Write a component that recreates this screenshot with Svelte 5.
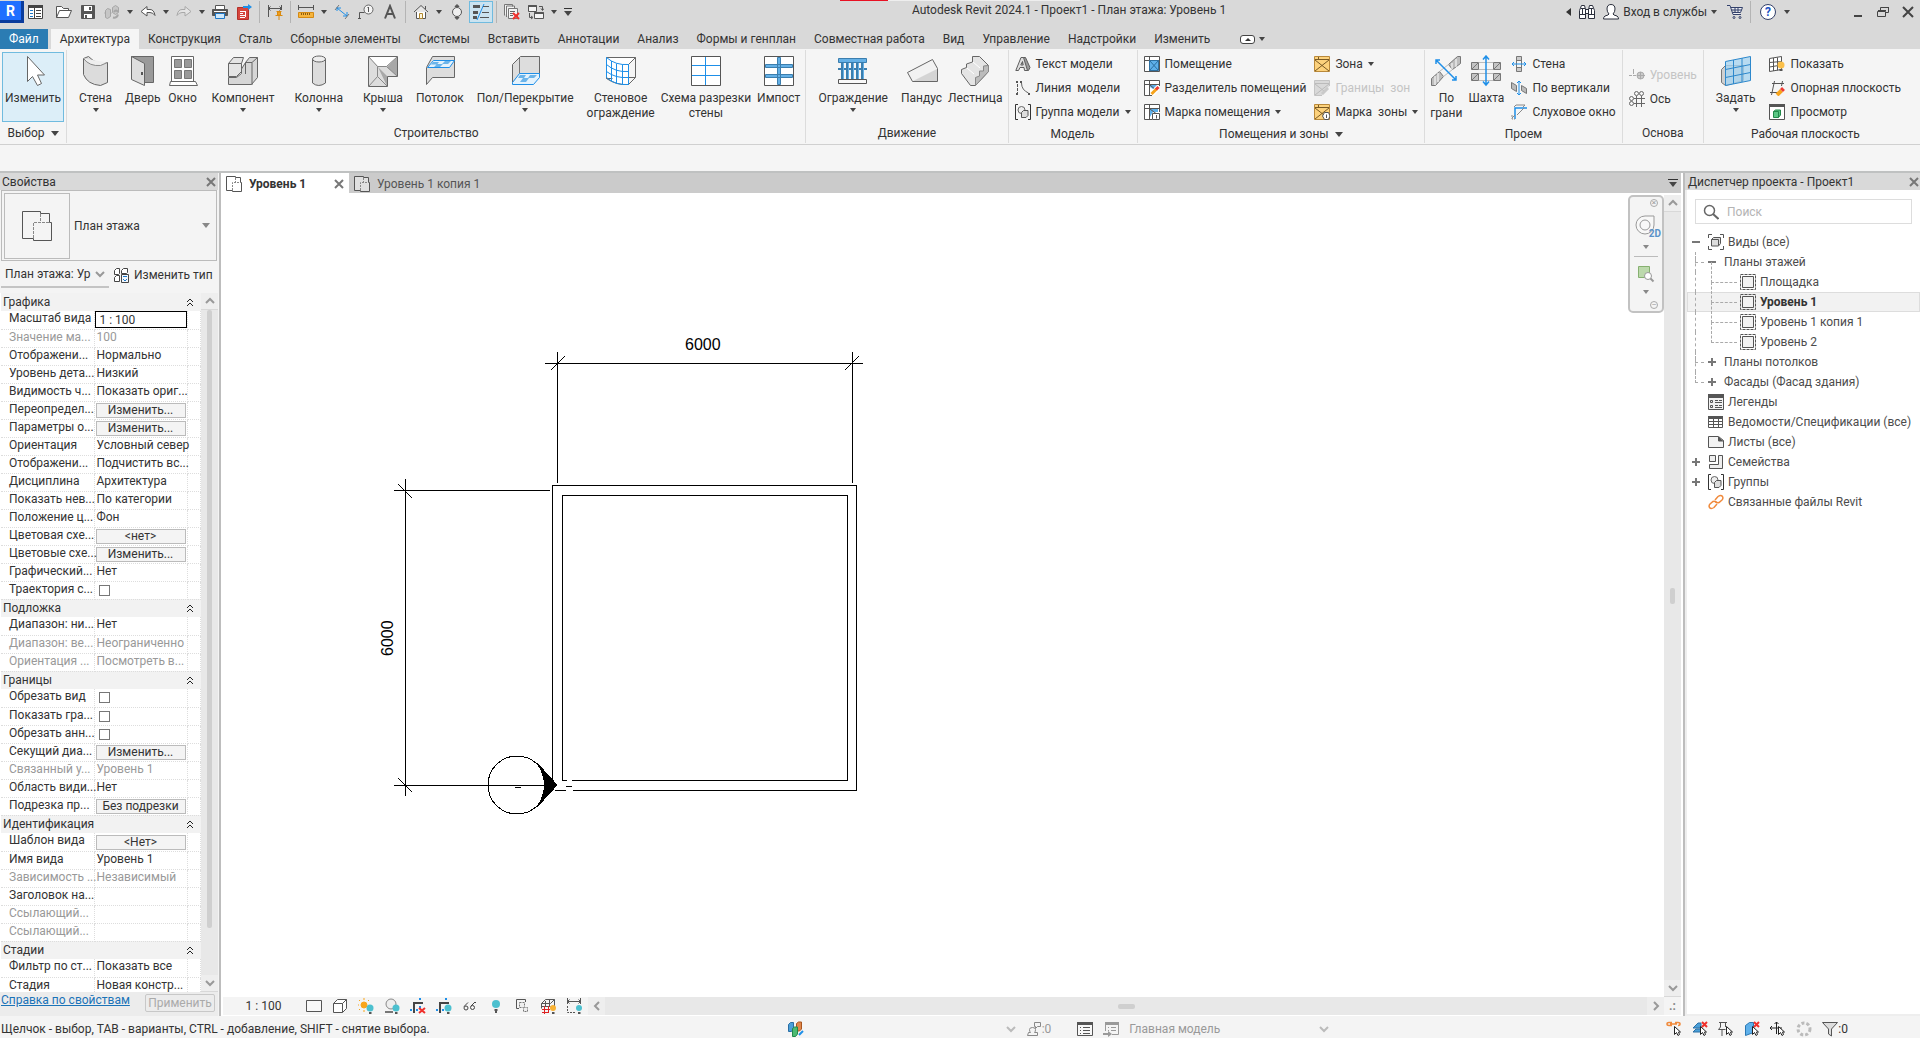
<script>
    // 16x16 icons
    const icons = {
        home: '<path fill="#fff" stroke="#444" d="M.5 1.5h14v13h-14z"/><path fill="#444" stroke="none" d="M0 1h15v3H0z"/><path stroke="#1e78c8" d="M2 6.5h3M2 9.5h3M2 12.5h3"/><path stroke="#444" d="M6.5 4v10M8 6.5h5M8 9.5h5M8 12.5h5"/>',
        open: '<path fill="#fff" stroke="#555" d="M.5 13.5v-11h5l2 2h5v2M.5 13.5l3-7h12l-3 7z"/>',
        save: '<path fill="#555" stroke="#555" d="M1.5 1.5h13v13h-13z"/><path fill="#fff" stroke="none" d="M4 2h8v5H4zM4 10h8v4H4z"/><path fill="#555" stroke="none" d="M9 3h2v3H9zM5 11h2v3H5z"/>',
        sync: '<g stroke="#a6a6a6" fill="#c6c6c6"><circle cx="4" cy="9" r="3"/><path d="M1.5 6.5l2-2 3 1v7l-3 2-2-1zM8.5 3.5l3-2 3 2v5l-3 2-3-2z"/><path fill="none" stroke-width="2" d="M9 13.5q4 1 5-3M10 8q2-3 4 0"/></g>',
        undo: '<path fill="#fff" stroke="#555" d="M1 7.500l6-5v3h3q4 0 5 6q-2-3-5-3H7v3.500z"/>',
        redo: '<path fill="#e4e4e4" stroke="#a8a8a8" d="M15 7.500l-6-5v3H6q-4 0-5 6q2-3 5-3h3v3.500z"/>',
        print: '<path fill="#fff" stroke="#555" d="M3.500 1.500h9v4h-9z"/><path fill="#555" stroke="#555" d="M.5 5.500h15v6H.5z"/><path fill="#cfe8fa" stroke="#1e78c8" d="M3.500 9.500h9v5h-9z"/><path stroke="#fff" d="M2 7.500h12"/>',
        pdf: '<path fill="#d6453d" stroke="#b53029" d="M1.500 3.500h11v12h-11z"/><path stroke="#fff" d="M4 7.500h6M4 9.500h3M4 11.500h6M4 13.500h5M9.500 7v6"/><path fill="#1e8fe8" stroke="none" d="M7 2h5V0l4 3-4 3V4H7z"/>',
        dim: '<path stroke="#555" d="M1.500 1v12M14.500 1v5M2 4.500h12M3.500 2.500l-2 2 2 2M12.500 2.500l2 2-2 2"/><path fill="#f6a31c" stroke="#d98a10" d="M9.500 7.500h5M10.500 8v3h3V8zM8.500 11.500h7M12 12v4"/>',
        ruler: '<path stroke="#555" d="M.5 1v5M15.500 1v5M1 3.500h14"/><path fill="#f6b43c" stroke="#d48a14" d="M.5 8.500h15v5H.5z"/><path stroke="#8a5c10" d="M3.500 9v2M5.500 9v2M7.500 9v2M9.500 9v2M11.500 9v2"/>',
        alignedDim: '<path stroke="#1e8fe8" d="M3 4l10 8M3 3v4M3 4h4M13 12V8M13 12H9"/><path stroke="#777" d="M1 6l4-5M11 15l4-5"/>',
        tag: '<circle cx="10.500" cy="5.500" r="4.500" fill="#f4f4f4" stroke="#666"/><path stroke="#555" d="M10.500 3v5M9.500 4l1-1M1.500 14.500v-6h5M0 14.500h3"/>',
        textA: '<path stroke="#555" stroke-width="2" d="M3 14.500L8 2l5 12.500M5 10h6"/>',
        house: '<path fill="#fff" stroke="#555" d="M3.500 7v7.500h9V7"/><path fill="#e6e6e6" stroke="#555" d="M1 8l7-6.500 7 6.500"/><path fill="#fdf6df" stroke="#b08830" d="M6.500 9.500h3v5h-3z"/><path stroke="#555" d="M12.500 2v3"/>',
        section: '<circle cx="8" cy="8" r="4.500" fill="#efefef" stroke="#555"/><path fill="#555" stroke="#555" d="M6 2.500L8 .500l2 2zM6 13.500l2 2 2-2z"/>',
        thin: '<path fill="#555" stroke="none" d="M0 1h7v3H0zM0 7h5v3H0zM0 12h4v3H0z"/><path stroke="#1e8fe8" stroke-width="1" d="M11 0L4 16"/><path stroke="#555" d="M10 2.500h6M9 8.500h7M7 13.500h9"/>',
        closeHidden: '<path fill="#f4f4f4" stroke="#777" d="M.5 11.500v-11h8v2M2.500 13v-11h8v2M4.500 4.500h9v10h-9z"/><path stroke="#666" d="M6 7.500h5M6 9.500h4M6 11.500h3"/><path stroke="#f0302c" stroke-width="2" d="M9 9l6 6M15 9l-6 6"/>',
        windows: '<path fill="#f4f4f4" stroke="#555" d="M.5 1.500h8v6h-8zM6.500 8.500h9v6h-9z"/><path stroke="#555" stroke-width="2" d="M.5 2h8M6.500 9h9"/><path stroke="#555" d="M11 2.500h3.500V6M13 4.500l1.500 2 1.500-2M1.500 9v4.500H4M3 12l2 1.500-2 1.500"/>',
        binoc: '<path fill="#fff" stroke="#2b2f3c" d="M2.500 1.500h3l1 4h3l1-4h3l2 5v8h-6v-5h-3v5h-6v-8z"/><path stroke="#2b2f3c" d="M2 4.500h4M10 4.500h4M.5 10.500h6M9.500 10.500h6M6.500 5v5M9.500 5v5M3.500 5v5M12.500 5v5"/>',
        user: '<path fill="#fff" stroke="#2b2f3c" d="M8 .5q4 0 4 4.500 0 3-2 5 0 1 4 2 1.500 1 1.500 3H.5q0-2 1.500-3 4-1 4-2-2-2-2-5Q4 .500 8 .500z"/>',
        cart: '<path fill="#eef0f6" stroke="#33406a" d="M0 1.500h3l3 9h8M4 3.500h11.500l-2 5H5.500M8 4v4M11 4v4M4.500 6h10"/><circle cx="7" cy="13.500" r="1" stroke="#33406a"/><circle cx="13" cy="13.500" r="1" stroke="#33406a"/>',
        floor: '<path fill="#fff" stroke="#555" d="M.5.500h9v1h5v5h1v9h-9v-1h-6z" fill-opacity=".4"/><path stroke="#888" stroke-dasharray="2 1" d="M6.500 14V6.500h8M9.500 2v4"/>',
        modelText: '<path fill="#9b9b9b" stroke="#5e5e5e" d="M7 1.500h3.500l4.500 10-1.500 3h-3L6 3z"/><path fill="#dedede" stroke="#5e5e5e" d="M.8 14.500L6 1.500h2.500l4 13h-3l-.5-3H5l-1.500 3zM5.800 9h2.400L7.500 5.500z"/>',
        modelLine: '<path stroke="#555" d="M2.500 4v9" stroke-dasharray="3 1"/><path stroke="#666" d="M6.500 3q0 7 7 10"/><g fill="#555" stroke="none"><path d="M1 1h2v2H1zM5 1h2v2H5zM1 13h2v2H1zM13 13h2v2h-2z"/></g>',
        group: '<path stroke="#333" d="M3 .500H.500v15H3M13 .500h2.500v15H13"/><circle cx="6.500" cy="6" r="3.500" fill="#eee" stroke="#666"/><path fill="#ddd" stroke="#555" d="M6.500 8.500l2-2h4.500v5l-2 2H6.500z"/>',
        room: '<path fill="#fff" stroke="#555" d="M.5.500h15v15H.5zM5.500.500v15M.5 4.500h15"/><path fill="#5eb0ea" stroke="#2d6fa0" d="M5.500 4.500h9v10h-9zM6 5l8 9M14 5l-8 9"/>',
        roomSep: '<path fill="#fff" stroke="#555" d="M15.500 6V.500H.500v15H8M5.500.500v15M.5 4.500h15"/><path fill="#5eb0ea" stroke="none" d="M6 5h7l-4 4-3-2z"/><path stroke="#555" d="M6 5l7 6"/><path stroke="#fff" stroke-width="5" d="M8 14l6-6"/><path stroke="#f6a31c" stroke-width="3" d="M7.500 14l5-5"/><path stroke="#ee3a34" stroke-width="3" d="M12 9.500l2.500-2.500"/>',
        roomTag: '<path fill="#fff" stroke="#555" d="M15.500 8V.500H.500v15H8M5.500.500v15M.5 4.500h15"/><path fill="#5eb0ea" stroke="none" d="M6 5h8v3H9l-3 5z"/><path stroke="#555" d="M6 5l8 6"/><path fill="#fff" stroke="#555" d="M8.500 9.500h7v6h-7zM12.500 11v3.500"/>',
        area: '<path fill="#fdd27c" stroke="#b9893a" d="M.5.500h15v15H.5z"/><path stroke="#7a5a24" d="M1 3.500h14M4.500 1v3M1 4l14 11M15 4L1 15"/>',
        areaSep: '<path fill="#d9d9d9" stroke="#c4c4c4" d="M15.500 6V.500H.500v15H8"/><path stroke="#bbb" d="M1 3.500h14M1 4l9 7M15 4L1 15"/><path stroke="#cacaca" stroke-width="3" d="M8 14l6-6"/>',
        areaTag: '<path fill="#fdd27c" stroke="#b9893a" d="M.5.500h15v15H.5z"/><path stroke="#7a5a24" d="M1 3.500h14M4.500 1v3M1 4l9 7M15 4L1 15"/><path fill="#fff" stroke="#555" d="M10.500 8.500h4l1.500 3.500-1.500 3.500h-4L8.500 12zM12.500 10.500v3.500"/>',
        openWall: '<g fill="#ccc" stroke="#777"><path d="M5.500.500h5v4h-5zM5.500 11.500h5v4h-5z"/></g><path stroke="#777" d="M5.500 4v8M10.500 4v8"/><path stroke="#1e8fe8" d="M1 8h14M3 6L1 8l2 2M13 6l2 2-2 2"/>',
        openVert: '<g fill="#bbb" stroke="#777"><path d="M.5 2.500l5 3v6l-5-3zM10.500 5.500l5 3v5l-5-3z"/></g><path stroke="#1e8fe8" d="M8 1v14M6 3l2-2 2 2M6 13l2 2 2-2"/>',
        dormer: '<path stroke="#1e8fe8" stroke-width="1.500" d="M4 15V4h12"/><path stroke="#888" d="M1 14l3-3M3 3l2-2h9l-2 2M6 11l7-7"/><path stroke="#888" stroke-dasharray="2 1" d="M1 11v4h3"/>',
        level: '<g stroke="#aaa"><path d="M0 8.500h8" stroke-dasharray="3 1"/><path d="M4.500 2v5"/><circle cx="11.500" cy="8.500" r="3.500" fill="#ccc"/><path fill="#aaa" d="M11.500 5v7M8 8.500h8"/></g>',
        axis: '<path stroke="#666" d="M5 7.500h11M5 12.500h11M7.500 5v11M12.500 5v11"/><g fill="#f5f5f5" stroke="#666"><circle cx="7.500" cy="2.500" r="2"/><circle cx="12.500" cy="2.500" r="2"/><circle cx="2.500" cy="7.500" r="2"/><circle cx="2.500" cy="12.500" r="2"/></g>',
        showPlane: '<path fill="#fff" stroke="#555" d="M.5 2.500l12-2v13l-12 2zM4.500 2v13M8.500 1.500v13M.5 6.500l12-1M.5 11l12-2"/><circle cx="12" cy="9" r="3.500" fill="#fbc04a" stroke="none"/><path stroke="#555" stroke-width="2" d="M10.500 14h3"/>',
        refPlane: '<path stroke="#555" d="M3 3.500h12M1 12.500h8M5.500 1L2.500 15M13.500 1l-1 5"/><path stroke="#f6a31c" stroke-width="4" d="M8 15l4.500-4.500"/><path stroke="#ee3a34" stroke-width="4" d="M12.500 10.500l2-2"/>',
        viewer: '<path fill="#fff" stroke="#555" d="M.5.500h15v15H.5z"/><path fill="#555" stroke="none" d="M0 0h16v3H0z"/><path fill="#5bc785" stroke="#22884a" d="M4.500 7.500l2-1.500h5v5l-2 2.500h-5zM4.500 7.500h5v6"/>',
        editType: '<g fill="#fff" stroke="#444"><path d="M1.500 3.500l2-2h3v5l-1 1h-4zM8.500 3.500l2-2h4v4l-1 1h-5zM1.500 10.500l2-2h3v6h-5z"/><path fill="#f2f7fd" d="M8.500 7.500h7v8h-7z"/></g><path stroke="#1e78c8" d="M10 9.500h4M10 12l2 2 2-2"/>',
        views: '<path stroke="#555" d="M.5 4V.500H4M12 .500h3.500V4M15.500 12v3.500H12M4 15.500H.500V12"/><path fill="#ddd" stroke="#555" d="M3.500 5.500l2-2h7v6l-2 2.500h-7zM3.500 5.500h7v6"/>',
        plan: '<path stroke="#555" stroke-dasharray="3 1" d="M.5.500h15v15H.5z"/><path fill="#f2f2f2" stroke="#555" d="M2.500 2.500h11v11h-11z"/>',
        legend: '<path fill="#f2f2f2" stroke="#555" d="M.5.500h15v15H.5z"/><path fill="#555" stroke="none" d="M0 0h16v4H0z"/><path stroke="#555" d="M2.500 6.500h2v2h-2zM2.500 11.500h2v2h-2zM7 6.500h3M11 6.500h3M7 8.500h7M7 11.500h3M11 11.500h3M7 13.500h7"/>',
        schedule: '<path stroke="#555" d="M.5 3.500h14v10H.5zM5.500 4v9M10.500 4v9M1 7.500h13M1 10.500h13"/><path fill="#555" stroke="none" d="M0 2h15v3H0z"/>',
        sheet: '<path fill="#f2f2f2" stroke="#555" d="M.5 2.500h10l5 4v7H.5zM10.500 3v4h5"/><path fill="#555" stroke="none" d="M11 3l4 4h-4z"/>',
        family: '<path fill="#eee" stroke="#555" d="M1.500 1.500h6v6h-6zM10.500 1.500h4v13h-13v-4h9z"/>',
        link: '<g stroke="#f08a3c" stroke-width="1.500"><path d="M7 6l3-3.500q3-2 4.500 0 1 2-.5 3.500l-3 2.500q-2 1-4-1"/><path d="M9 10l-3 3.500q-3 2-4.500 0-1-2 .5-3.500L5 7.500q2-1 4 1"/></g>',
        detail: '<path fill="#f8f8f8" stroke="#555" d="M.5 2.500h15v11H.5z"/>',
        cube: '<path fill="#fff" stroke="#555" d="M1.500 5.500l4-4h9v9l-4 4h-9zM1.500 5.500h9v9M10.500 5.500l4-4"/>',
        sun: '<circle cx="6" cy="7" r="3" fill="#f9a51b" stroke="#f9a51b"/><path stroke="#f9a51b" d="M6 0v2M6 12v2M0 7h1M1 2l1 1M10 3l1-1M1 12l1-1"/><circle cx="12" cy="10" r="3.500" fill="#4cc0cf" stroke="none"/><path stroke="#555" stroke-width="2" d="M11 15h2.500"/>',
        shadow: '<circle cx="7" cy="6" r="5" fill="#eee" stroke="#888"/><path stroke="#777" stroke-width="2" d="M1 14h8"/><circle cx="12" cy="10" r="3.500" fill="#4cc0cf" stroke="none"/><path stroke="#555" stroke-width="2" d="M11 15h2.500"/>',
        cropOff: '<path stroke="#444" stroke-width="2" d="M4 15V5h9"/><path stroke="#1e8fe8" stroke-width="2" d="M10 0v2M10 8v3M0 12h2M6 12h2"/><path stroke="#f0302c" stroke-width="2" d="M9 10l6 5M15 10l-6 5"/>',
        cropHide: '<path stroke="#444" stroke-width="2" d="M4 15V5h9"/><path stroke="#1e8fe8" stroke-width="2" d="M10 0v2M0 12h2M6 12h2"/><circle cx="12" cy="10" r="3.500" fill="#4cc0cf" stroke="none"/><path stroke="#555" stroke-width="2" d="M11 15h2.500"/>',
        glasses: '<path stroke="#444" d="M2 8.500l4-4M9 8l4-4 1 1"/><circle cx="4" cy="10" r="2" stroke="#444"/><circle cx="10.500" cy="9.500" r="2" stroke="#444"/>',
        bulb: '<circle cx="8" cy="6" r="4" fill="#4cc0cf" stroke="none"/><path stroke="#555" stroke-width="2" d="M6.500 12h3M7 14h2"/>',
        tempView: '<path stroke="#555" d="M11.500 4V1.500h-9v9H5"/><path fill="#eee" stroke="#777" stroke-dasharray="2 1" d="M5.500 4.500h5v5h3v4h-4v-4h-4z"/>',
        analytic: '<path stroke="#555" d="M1.500 5.500l4-4h9v8M1.500 5.500h9l4-4M5.500 3v6M9.500 2v6M1.500 5.500v5M1.500 8.500h9"/><path stroke="#d22" d="M4.500 8v8M8.500 8v7M2 11.500h8M2 14.500h7"/><circle cx="13" cy="10" r="3" fill="#f9b233" stroke="none"/><path stroke="#555" stroke-width="2" d="M12 15h2.500"/>',
        constraint: '<path stroke="#555" d="M1.500 0v6M14.500 0v6M2 3.500h12M3.500 1.500l-2 2 2 2M12.500 1.500l2 2-2 2"/><path stroke="#555" stroke-dasharray="2 1" d="M1.500 8v6.500h8"/><circle cx="13" cy="10" r="3" fill="#4cc0cf" stroke="none"/><path stroke="#555" stroke-width="2" d="M12 15h2.500"/>',
        worksets: '<path fill="#4a9fd8" stroke="#2a6ea4" d="M.5 3.500l2-2h3v6l-2 3h-3z"/><path fill="#e0864a" stroke="#a8541e" d="M8.500 2.500l2-1.500h3v7l-2 2h-3z"/><path fill="#4cba72" stroke="#22884a" d="M4.500 7.500l2-1.500h3v7l-2 2.500h-3z"/><path stroke="#1e8fe8" stroke-width="2" d="M11 14l4-4"/>',
        request: '<path stroke="#888" d="M1.500 14.500h10v-3h-3q1-1 1-3t-3-2-3 2 1 3h-2zM8.500 1.500h6v4h-3l-2 2v-2h-1z"/>',
        options: '<path fill="#f8f8f8" stroke="#555" d="M.5 1.500h15v13H.5z"/><path fill="#555" stroke="none" d="M0 1h16v3H0z"/><path stroke="#555" d="M3 6.500h1M6 6.500h7M3 9.500h1M6 9.500h7M3 12.500h1M6 12.500h7"/>',
        optionAdd: '<path stroke="#999" d="M2.500 10V1.500h13v12H9"/><path fill="#999" stroke="none" d="M2 1h14v3H2zM0 12h5v-2l4 3-4 3v-2H0z"/><path stroke="#999" d="M5 6.500h1M8 6.500h5M5 9.500h1M8 9.500h5"/>',
        selLink: '<path stroke="#f08a3c" stroke-width="1.500" d="M6 1.500H3q-2 0-2 1.500t2 1.500h3M9 1.500h3q2 0 2 1.500t-2 1.500M4 3h7"/><path fill="#fff" stroke="#222" d="M8.500 5.500v8l2-2 1.500 3 1.500-1-1-2.500h2z"/>',
        selUnder: '<path fill="#4a9fd8" stroke="#2a6ea4" d="M1 7l5-5h3v5zM1 11l3-3h5v3z"/><path stroke="#f0302c" stroke-width="2" d="M10 1l5 5M15 1l-5 5"/><path fill="#fff" stroke="#222" d="M8.500 5.500v8l2-2 1.500 3 1.500-1-1-2.500h2z"/>',
        selPin: '<path stroke="#555" d="M1 1.500h8M2.500 2v4L.500 8.500h7M7.500 2v4M4 9v6"/><path fill="#fff" stroke="#222" d="M8.500 5.500v8l2-2 1.500 3 1.500-1-1-2.500h2z"/>',
        selFace: '<path fill="#5eb0ea" stroke="#2a78b4" d="M1.500 4.500l4-3h4v10l-8 3z"/><path stroke="#f0302c" stroke-width="2" d="M10 1l5 5M15 1l-5 5"/><path fill="#fff" stroke="#222" d="M8.500 5.500v8l2-2 1.500 3 1.500-1-1-2.500h2z"/>',
        selDrag: '<path stroke="#222" d="M6.500 1v12M0 7h12M4.500 3l2-2 2 2M2 5L0 7l2 2"/><path fill="#fff" stroke="#222" d="M8.500 5.500v8l2-2 1.500 3 1.500-1-1-2.500h2z"/>',
        progress: '<circle cx="8" cy="8" r="6" stroke="#bbb" stroke-width="3" stroke-dasharray="3 2"/>',
        filter: '<path fill="#ddd" stroke="#555" d="M.5 1.500h15l-6 6.500v7l-3-2V8z"/>',
        search: '<circle cx="6.500" cy="6.500" r="5" stroke="#666" stroke-width="1.500"/><path stroke="#666" stroke-width="2" d="M10 10l5.500 5"/>'
    };

    // 32x32 ribbon icons
    const bigIcons = {
        modify: '<path fill="#fff" stroke="#666" d="M10.500 1.500v25l5-5 5 9 4-2-4-8.500h7z"/>',
        wall: '<path fill="#dcdcdc" stroke="#666" d="M3.500 3.500l5-2q5 6 11 6h8v20l-7 3q-13-1-17-11z"/><path fill="#eee" stroke="#888" d="M3.500 3.500q6 8 17 7l7-3"/>',
        door: '<path fill="#9a9a9a" stroke="#666" d="M4.500 1.500h22v26h-12z"/><path fill="#dedede" stroke="#666" d="M4.500 1.500l13 7v22l-13-6z"/><path stroke="#555" stroke-width="2" d="M15 17v3"/>',
        window: '<path fill="#fff" stroke="#666" d="M4.500 1.500h22v25h-22z"/><path fill="#9a9a9a" stroke="#777" d="M7.500 4.500h7v8h-7zM17.500 4.500h7v8h-7zM7.500 15.500h7v8h-7zM17.500 15.500h7v8h-7z"/><path fill="#fff" stroke="#666" d="M3.500 26.500h25l2 4h-28z"/>',
        component: '<path fill="#e4e4e4" stroke="#666" d="M1.500 8.500l5-6h10l-2 6v8l-5 5h-8z"/><path fill="#d6d6d6" stroke="#666" d="M1.500 22.500h8l5-4V14l4-6.500 4-5h8v20l-6 7h-23z"/><path stroke="#666" d="M1.500 8.500h13M25 8v22M18.500 7.500H25l5.500-5M18.500 7.500V19"/>',
        column: '<path fill="#dcdcdc" stroke="#666" d="M9.500 4v24q6 5 13 0V4"/><ellipse cx="16" cy="4" rx="6.500" ry="3" fill="#eee" stroke="#666"/>',
        roof: '<path fill="#ddd" stroke="#666" d="M1.500 1.500h29v20h-10v10h-19z"/><path fill="#fff" stroke="none" d="M2 2h28L20 11h-9z"/><path fill="#a8a8a8" stroke="none" d="M30 2v19l-10-9zM11 12l9 9v10z"/><path stroke="#888" d="M1.500 1.500l9 10h9l11 10M30.500 1.500l-11 10M10.500 11.500v10l-9 10M10.500 21.500l10 10"/>',
        ceiling: '<path fill="#ddd" stroke="#666" d="M2.500 29.500v-17l6-11h22v21h-22z"/><path fill="#e4f2fc" stroke="#1e8fe8" d="M3.500 12.500l6-7h21l-5 7z"/><path fill="#6bb4ea" stroke="none" d="M9 7h6l-2 2.500H7zM21 6h6l-3 3h-6zM13 9h6l-3 3h-6z"/>',
        slab: '<path fill="#ddd" stroke="#666" d="M3.500 28.500v-19l8-8h19v18h-20z"/><path stroke="#777" d="M10.500 2.500v17"/><path fill="#e4f2fc" stroke="#1e8fe8" d="M3.500 27.500l7-9h20v4l-6 7h-21z"/><path fill="#6bb4ea" stroke="none" d="M11 20h6l-2 3H9zM21 20h7l-3 3h-6zM14 23h6l-3 4h-6z"/>',
        curtain: '<path fill="#fff" stroke="#666" d="M1.500 2.500h29l-7 7v20q-12 1-22-6z"/><path stroke="#666" d="M30.500 2.500v20l-7 7M1.500 23.500h6M23.500 22.500h7"/><path stroke="#1e8fe8" d="M1.500 2.500q9 8 22 7v20q-13 1-22-7zM1.500 9.500q9 8 22 7M1.500 16.500q9 7 22 6M6.500 6v20M11.500 8.500v20M17.500 9.500v20"/>',
        grid: '<path fill="#fff" stroke="#555" d="M1.500 1.500h29v29h-29z"/><path stroke="#1e8fe8" d="M15.500 2v28M2 10.500h28M2 20.500h28"/>',
        mullion: '<path fill="#fff" stroke="#555" d="M1.500 1.500h29v29h-29z"/><path fill="#64b0e6" stroke="#3b7eae" d="M2.500 9.500h27v3h-27zM2.500 19.500h27v3h-27zM14.500 2.500h3v27h-3z"/>',
        railing: '<path fill="#64b0e6" stroke="#3b7eae" d="M1.500 3.500h28v4h-28z"/><path fill="#f8f8f8" stroke="#555" d="M1.500 24.500h28v4h-28z"/><path stroke="#3b7eae" stroke-width="2" d="M5 8v16M10 8v16M15 8v16M20 8v16M25 8v16M1 14h29"/><path stroke="#64b0e6" d="M6.500 8v16M11.500 8v16M16.500 8v16M21.500 8v16M26.500 8v16"/>',
        ramp: '<path fill="#f2f2f2" stroke="#666" d="M1.500 17.500l25-13 5 9v13h-25z"/><path fill="#d4d4d4" stroke="none" d="M7 26l24-12v12z"/>',
        stairs: '<path fill="#e4e4e4" stroke="#666" d="M2.500 18.500v-4l5-2V9l6-2V1.500h7l9 9v6l-13 14h-5z"/><path fill="#bcbcbc" stroke="#888" d="M20.500 21v-5h4v-5l5-.5v6l-13 14v-8z"/><path stroke="#fff" d="M8 13l7 6M14 7l7 6"/>',
        byFace: '<path fill="#bdbdbd" stroke="#777" d="M1.500 30.500v-7l8-7 4 5-8 9zM18.500 9.500l9-8h3v7l-8 6z"/><path stroke="#fff" d="M5 21v9M8 18v9M22 8v6M26 4v8"/><path stroke="#bbb" d="M9.500 16.500l9-7M13.500 21.500l9-7"/><path stroke="#1e8fe8" stroke-width="1.500" d="M6 5l20 20M6 9V5h4M26 21v4h-4"/>',
        shaft: '<g fill="#c4c4c4" stroke="#777"><path d="M1.500 7.500h7v7h-7zM23.500 7.500h7v7h-7zM1.500 18.500h7v7h-7zM23.500 18.500h7v7h-7z"/></g><path stroke="#777" d="M2 14l6-6M2 25l6-6M24 14l6-6M24 25l6-6"/><path stroke="#bbb" d="M9 7.500h14M9 14.500h14M9 18.500h14M9 25.500h14"/><path stroke="#1e8fe8" stroke-width="1.500" d="M16 1v29M13 4.500L16 1l3 3.500M13 26.500l3 3.500 3-3.500"/>',
        setPlane: '<path fill="#d0d0d0" stroke="#777" d="M1.500 14.500l4-4h18v15l-18 5-4-3z"/><path fill="#a9d4f0" fill-opacity=".8" stroke="#2d88cc" d="M5.500 6.500l25-5v24l-25 5zM13.500 5v24M22 3v24M5.500 14.500l25-5M5.500 22.500l25-5"/>'
    };

    const quickAccess = [
        'home', 'open', 'save', 'sync', 'caret', 'undo', 'caret', 'redo', 'caret', 'print', 'pdf', 'sep',
        'dim', 'sep', 'ruler', 'caret', 'alignedDim', 'tag', 'textA', 'sep', 'house', 'caret', 'section',
        'thin', 'sep', 'closeHidden', 'windows', 'caret'
    ];

    const tabs = [
        'Файл', 'Архитектура', 'Конструкция', 'Сталь', 'Сборные элементы', 'Системы', 'Вставить', 'Аннотации',
        'Анализ', 'Формы и генплан', 'Совместная работа', 'Вид', 'Управление', 'Надстройки', 'Изменить'
    ];

    const panels = [
        { title: 'Выбор', more: true, big: [{ icon: 'modify', text: 'Изменить', active: true }] },
        {
            title: 'Строительство',
            big: [
                { icon: 'wall', text: 'Стена', split: true },
                { icon: 'door', text: 'Дверь' },
                { icon: 'window', text: 'Окно' },
                { icon: 'component', text: 'Компонент', split: true },
                { icon: 'column', text: 'Колонна', split: true },
                { icon: 'roof', text: 'Крыша', split: true },
                { icon: 'ceiling', text: 'Потолок' },
                { icon: 'slab', text: 'Пол/Перекрытие', split: true },
                { icon: 'curtain', text: 'Стеновое\nограждение' },
                { icon: 'grid', text: 'Схема разрезки\nстены' },
                { icon: 'mullion', text: 'Импост' }
            ]
        },
        {
            title: 'Движение',
            big: [
                { icon: 'railing', text: 'Ограждение', split: true },
                { icon: 'ramp', text: 'Пандус' },
                { icon: 'stairs', text: 'Лестница' }
            ]
        },
        {
            title: 'Модель',
            cols: [[
                { icon: 'modelText', text: 'Текст модели' },
                { icon: 'modelLine', text: 'Линия  модели' },
                { icon: 'group', text: 'Группа модели', split: true }
            ]]
        },
        {
            title: 'Помещения и зоны',
            more: true,
            cols: [
                [
                    { icon: 'room', text: 'Помещение' },
                    { icon: 'roomSep', text: 'Разделитель помещений' },
                    { icon: 'roomTag', text: 'Марка помещения', split: true }
                ],
                [
                    { icon: 'area', text: 'Зона', split: true },
                    { icon: 'areaSep', text: 'Границы  зон', disabled: true },
                    { icon: 'areaTag', text: 'Марка  зоны', split: true }
                ]
            ]
        },
        {
            title: 'Проем',
            big: [{ icon: 'byFace', text: 'По\nграни' }, { icon: 'shaft', text: 'Шахта' }],
            cols: [[
                { icon: 'openWall', text: 'Стена' },
                { icon: 'openVert', text: 'По вертикали' },
                { icon: 'dormer', text: 'Слуховое окно' }
            ]]
        },
        {
            title: 'Основа',
            cols: [[{ icon: 'level', text: 'Уровень', disabled: true }, { icon: 'axis', text: 'Ось' }]]
        },
        {
            title: 'Рабочая плоскость',
            big: [{ icon: 'setPlane', text: 'Задать', split: true }],
            cols: [[
                { icon: 'showPlane', text: 'Показать' },
                { icon: 'refPlane', text: 'Опорная плоскость' },
                { icon: 'viewer', text: 'Просмотр' }
            ]]
        }
    ];

    // type: input, button, check, or plain text when left out
    const groups = [
        {
            name: 'Графика',
            rows: [
                { name: 'Масштаб вида', value: '1 : 100', type: 'input' },
                { name: 'Значение ма...', value: '100', off: true },
                { name: 'Отображени...', value: 'Нормально' },
                { name: 'Уровень дета...', value: 'Низкий' },
                { name: 'Видимость ч...', value: 'Показать ориг...' },
                { name: 'Переопредел...', value: 'Изменить...', type: 'button' },
                { name: 'Параметры о...', value: 'Изменить...', type: 'button' },
                { name: 'Ориентация', value: 'Условный север' },
                { name: 'Отображени...', value: 'Подчистить вс...' },
                { name: 'Дисциплина', value: 'Архитектура' },
                { name: 'Показать нев...', value: 'По категории' },
                { name: 'Положение ц...', value: 'Фон' },
                { name: 'Цветовая схе...', value: '<нет>', type: 'button' },
                { name: 'Цветовые схе...', value: 'Изменить...', type: 'button' },
                { name: 'Графический...', value: 'Нет' },
                { name: 'Траектория с...', type: 'check' }
            ]
        },
        {
            name: 'Подложка',
            rows: [
                { name: 'Диапазон: ни...', value: 'Нет' },
                { name: 'Диапазон: ве...', value: 'Неограниченно', off: true },
                { name: 'Ориентация ...', value: 'Посмотреть в...', off: true }
            ]
        },
        {
            name: 'Границы',
            rows: [
                { name: 'Обрезать вид', type: 'check' },
                { name: 'Показать гра...', type: 'check' },
                { name: 'Обрезать анн...', type: 'check' },
                { name: 'Секущий диа...', value: 'Изменить...', type: 'button' },
                { name: 'Связанный у...', value: 'Уровень 1', off: true },
                { name: 'Область види...', value: 'Нет' },
                { name: 'Подрезка пр...', value: 'Без подрезки', type: 'button' }
            ]
        },
        {
            name: 'Идентификация',
            rows: [
                { name: 'Шаблон вида', value: '<Нет>', type: 'button' },
                { name: 'Имя вида', value: 'Уровень 1' },
                { name: 'Зависимость ...', value: 'Независимый', off: true },
                { name: 'Заголовок на...', value: '' },
                { name: 'Ссылающий...', value: '', off: true },
                { name: 'Ссылающий...', value: '', off: true }
            ]
        },
        {
            name: 'Стадии',
            rows: [
                { name: 'Фильтр по ст...', value: 'Показать все' },
                { name: 'Стадия', value: 'Новая констр...' }
            ]
        }
    ];

    const viewTools = ['detail', 'cube', 'sun', 'shadow', 'cropOff', 'cropHide', 'glasses', 'bulb', 'tempView', 'analytic', 'constraint'];
    const selectTools = ['selLink', 'selUnder', 'selPin', 'selFace', 'selDrag', 'progress'];

    const tree = [
        { text: 'Виды (все)', level: 0, sign: '-', icon: 'views' },
        { text: 'Планы этажей', level: 1, sign: '-' },
        { text: 'Площадка', level: 2, icon: 'plan' },
        { text: 'Уровень 1', level: 2, icon: 'plan', current: true },
        { text: 'Уровень 1 копия 1', level: 2, icon: 'plan' },
        { text: 'Уровень 2', level: 2, icon: 'plan' },
        { text: 'Планы потолков', level: 1, sign: '+' },
        { text: 'Фасады (Фасад здания)', level: 1, sign: '+', last: true },
        { text: 'Легенды', level: 0, icon: 'legend' },
        { text: 'Ведомости/Спецификации (все)', level: 0, icon: 'schedule' },
        { text: 'Листы (все)', level: 0, icon: 'sheet' },
        { text: 'Семейства', level: 0, sign: '+', icon: 'family' },
        { text: 'Группы', level: 0, sign: '+', icon: 'group' },
        { text: 'Связанные файлы Revit', level: 0, icon: 'link' }
    ];
</script>

{#snippet icon(name)}
    <svg class="icon" viewBox="0 0 16 16" aria-hidden="true">{@html icons[name]}</svg>
{/snippet}

{#snippet cross()}
    <svg class="cross" viewBox="0 0 10 10" aria-hidden="true"><path d="M1 1l8 8M9 1L1 9" /></svg>
{/snippet}

{#snippet chevron(dir)}
    <svg class="chevron {dir}" viewBox="0 0 10 10" aria-hidden="true"><path d="M1 3l4 4 4-4" /></svg>
{/snippet}

<div class="app">
    <header class="titlebar">
        <nav class="quick">
            <button class="logo" aria-label="Revit">R</button>
            {#each quickAccess as item}
                {#if item === 'sep'}
                    <span class="sep"></span>
                {:else if item === 'caret'}
                    <span class="caret"></span>
                {:else}
                    <button class="tool {item}" aria-label={item}>{@render icon(item)}</button>
                {/if}
            {/each}
            <button class="more" aria-label="Настройка панели"><span class="caret wide"></span></button>
        </nav>
        <h1>Autodesk Revit 2024.1 - Проект1 - План этажа: Уровень 1</h1>
        <div class="account">
            <span class="caret left"></span>
            <button class="tool" aria-label="Поиск">{@render icon('binoc')}</button>
            <button class="login">{@render icon('user')} Вход в службы <span class="caret"></span></button>
            <button class="tool" aria-label="Магазин">{@render icon('cart')}</button>
            <span class="sep"></span>
            <button class="help" aria-label="Справка">?</button>
            <span class="caret"></span>
        </div>
        <div class="window-buttons">
            <button aria-label="Свернуть"><svg viewBox="0 0 12 12"><path stroke-width="2" d="M2 10h8" /></svg></button>
            <button aria-label="Восстановить"><svg viewBox="0 0 12 12"><path d="M3.5 4V1.500h8v5H9M.5 5.500h8v5h-8zM1 4.500h8M4 1.500h8" /></svg></button>
            <button aria-label="Закрыть"><svg viewBox="0 0 12 12"><path stroke-width="2" d="M1 1l10 10M11 1L1 11" /></svg></button>
        </div>
        <span class="recording"></span>
    </header>

    <nav class="tabs">
        {#each tabs as tab, i}
            <button class:file={i === 0} class:active={i === 1}>{tab}</button>
        {/each}
        <button class="minimize" aria-label="Свернуть ленту"><span class="pill"></span><span class="caret"></span></button>
    </nav>

    <section class="ribbon">
        {#each panels as panel}
            <div class="panel">
                <div class="panel-body">
                    {#each panel.big ?? [] as item}
                        <button class="big" class:split={item.split} class:active={item.active}>
                            <svg class="big-icon" viewBox="0 0 32 32" aria-hidden="true">{@html bigIcons[item.icon]}</svg>
                            <span>{item.text}</span>
                            {#if item.split}<span class="caret"></span>{/if}
                        </button>
                    {/each}
                    {#each panel.cols ?? [] as col}
                        <div class="col">
                            {#each col as item}
                                <button class="small" disabled={item.disabled}>
                                    {@render icon(item.icon)}
                                    <span>{item.text}</span>
                                    {#if item.split}<span class="caret"></span>{/if}
                                </button>
                            {/each}
                        </div>
                    {/each}
                </div>
                <div class="panel-title">{panel.title}{#if panel.more}<span class="caret wide"></span>{/if}</div>
            </div>
        {/each}
    </section>
    <div class="options-bar"></div>

    <main>
        <aside class="properties">
            <h2>Свойства <button aria-label="Закрыть">{@render cross()}</button></h2>
            <label class="type">
                <span class="preview">
                    <svg viewBox="0 0 32 32" aria-hidden="true">
                        <path d="M1.5 1.500h18v2h9v9h2v18h-18v-2h-11z" />
                        <path class="dash" d="M12.500 28V12.500h16M19.500 4v8" />
                    </svg>
                </span>
                <select aria-label="Тип"><option>План этажа</option></select>
                <span class="caret wide"></span>
            </label>
            <div class="instance">
                <label>
                    <select aria-label="Экземпляр"><option>План этажа: Ур</option></select>
                    {@render chevron('down')}
                </label>
                <button>{@render icon('editType')} Изменить тип</button>
            </div>
            <div class="grid-wrap">
                <div class="grid-scroll">
                    <table>
                        <colgroup><col class="c-name" /><col class="c-value" /><col /></colgroup>
                        <tbody>
                            {#each groups as group, g}
                                <tr class="group">
                                    <th colspan="2">{group.name}</th>
                                    <th><svg viewBox="0 0 8 8" aria-hidden="true"><path d="M1 4l3-3 3 3M1 8l3-3 3 3" /></svg></th>
                                </tr>
                                {#each group.rows as row, r}
                                    <tr class:off={row.off}>
                                        <td><label for="p{g}-{r}">{row.name}</label></td>
                                        <td>
                                            {#if row.type === 'input'}
                                                <input id="p{g}-{r}" type="text" value={row.value} />
                                            {:else if row.type === 'button'}
                                                <button id="p{g}-{r}">{row.value}</button>
                                            {:else if row.type === 'check'}
                                                <input id="p{g}-{r}" type="checkbox" />
                                            {:else}
                                                <output id="p{g}-{r}">{row.value}</output>
                                            {/if}
                                        </td>
                                        <td></td>
                                    </tr>
                                {/each}
                            {/each}
                        </tbody>
                    </table>
                </div>
                <div class="vscroll">
                    <button aria-label="Вверх">{@render chevron('up')}</button>
                    <div class="track"><span class="thumb long"></span></div>
                    <button aria-label="Вниз">{@render chevron('down')}</button>
                </div>
            </div>
            <footer>
                <a href="#help">Справка по свойствам</a>
                <button disabled>Применить</button>
            </footer>
        </aside>

        <section class="view">
            <nav class="view-tabs">
                <div class="view-tab active">
                    {@render icon('floor')}<span>Уровень 1</span>
                    <button aria-label="Закрыть">{@render cross()}</button>
                </div>
                <div class="view-tab">{@render icon('floor')}<span>Уровень 1 копия 1</span></div>
                <button class="more" aria-label="Список видов"><span class="caret wide"></span></button>
            </nav>
            <div class="canvas-row">
                <div class="canvas">
                    <svg class="drawing" aria-label="План этажа">
                        <!-- walls -->
                        <path d="M331.500 588V292.500h304v305h-284M345 597.500h-11" />
                        <path d="M351 587.500h275.500v-285h-285v285h4" />
                        <path d="M345 593.500h6" />
                        <!-- horizontal dimension -->
                        <path d="M324 170.500h318M336.500 159v131M631.500 159v131M330 177l14-14M624 177l14-14" />
                        <text x="464" y="157">6000</text>
                        <!-- vertical dimension -->
                        <path d="M184.500 286v317M173 297.500h156M173 592.500h152M177 291l14 14M177 585l14 14" />
                        <text transform="translate(172 463) rotate(-90)">6000</text>
                        <!-- section mark -->
                        <circle cx="296" cy="592" r="29" />
                        <path class="solid" d="M316 570L336 592 316 614Q331 592 316 570z" />
                        <path d="M294 594.500h6" />
                    </svg>
                    <div class="navbar">
                        <i class="dot">×</i>
                        <button aria-label="Штурвал">
                            <svg viewBox="0 0 24 24" aria-hidden="true">
                                <path d="M2 11a9 9 0 0 1 9-9h9v9a9 9 0 0 1-18 0z" />
                                <circle cx="11" cy="11" r="5" />
                            </svg>
                            <b>2D</b>
                        </button>
                        <span class="caret"></span>
                        <hr />
                        <button aria-label="Зум">
                            <svg viewBox="0 0 18 18" aria-hidden="true">
                                <path fill="#bcd9ac" stroke="#86b070" d="M1.500 1.500h11v11h-11z" />
                                <circle cx="11" cy="11" r="3.500" fill="#fff" />
                                <path stroke-width="2" d="M13.500 13.500l3 3" />
                            </svg>
                        </button>
                        <span class="caret"></span>
                        <i class="dot">–</i>
                    </div>
                </div>
                <div class="vscroll">
                    <button aria-label="Вверх">{@render chevron('up')}</button>
                    <div class="track mid"><span class="thumb"></span></div>
                    <button aria-label="Вниз">{@render chevron('down')}</button>
                </div>
            </div>
            <div class="view-bar">
                <button class="scale">1 : 100</button>
                {#each viewTools as tool}
                    <button class="tool" aria-label={tool}>{@render icon(tool)}</button>
                {/each}
                <div class="hscroll">
                    <button aria-label="Влево">{@render chevron('west')}</button>
                    <div class="htrack"><span class="hthumb"></span></div>
                    <button aria-label="Вправо">{@render chevron('east')}</button>
                </div>
                <span class="grip">.:</span>
            </div>
        </section>

        <aside class="browser">
            <h2>Диспетчер проекта - Проект1 <button aria-label="Закрыть">{@render cross()}</button></h2>
            <div class="browser-body">
                <label class="search">{@render icon('search')}<input type="text" placeholder="Поиск" aria-label="Поиск" /></label>
                <ul>
                    {#each tree as node}
                        <li class="level{node.level}" class:current={node.current} class:last={node.last}>
                            <span class="sign" class:minus={node.sign === '-'} class:plus={node.sign === '+'}></span>
                            {#if node.icon}{@render icon(node.icon)}{/if}
                            <span>{node.text}</span>
                        </li>
                    {/each}
                </ul>
            </div>
        </aside>
    </main>

    <footer class="status">
        <p>Щелчок - выбор, TAB - варианты, CTRL - добавление, SHIFT - снятие выбора.</p>
        <div class="worksets">
            <label>{@render icon('worksets')}<select aria-label="Рабочий набор"><option></option></select>{@render chevron('down')}</label>
            <button class="pale">{@render icon('request')}:0</button>
            <button aria-label="Варианты">{@render icon('options')}</button>
            <button aria-label="Добавить">{@render icon('optionAdd')}</button>
            <label class="model"><select aria-label="Вариант"><option>Главная модель</option></select>{@render chevron('down')}</label>
        </div>
        <div class="selection">
            {#each selectTools as tool}
                <button aria-label={tool}>{@render icon(tool)}</button>
            {/each}
            <button>{@render icon('filter')}:0</button>
        </div>
    </footer>
</div>

<style>
    :global(body) {
        margin: 0;
        background: #fff;
    }

    .app {
        display: flex;
        flex-direction: column;
        height: 100vh;
        overflow: hidden;
        font: 12px/16px Roboto, "Open Sans", sans-serif;
        color: #333;
    }

    * {
        box-sizing: border-box;
    }

    button,
    input,
    select {
        margin: 0;
        padding: 0;
        border: 0;
        background: none;
        font: inherit;
        color: inherit;
        appearance: none;
        white-space: nowrap;
    }

    h1,
    h2,
    p,
    ul {
        margin: 0;
        padding: 0;
        font: inherit;
        list-style: none;
    }

    .icon {
        display: block;
        flex: none;
        width: 16px;
        height: 16px;
        fill: none;
        stroke: #666;
    }

    .caret {
        display: inline-block;
        flex: none;
        width: 0;
        border: 3px solid transparent;
        border-top: 4px solid #444;
        border-bottom: 0;
    }

    .caret.wide {
        border-width: 5px 4px 0;
    }

    .caret.left {
        border: 4px solid transparent;
        border-right: 5px solid #333;
        border-left: 0;
    }

    .cross {
        display: block;
        width: 10px;
        height: 10px;
        stroke: #777;
        stroke-width: 2;
    }

    .chevron {
        display: block;
        flex: none;
        width: 10px;
        height: 10px;
        fill: none;
        stroke: #999;
        stroke-width: 2;
    }

    .chevron.up { transform: rotate(180deg); }
    .chevron.west { transform: rotate(90deg); }
    .chevron.east { transform: rotate(-90deg); }

    .sep {
        width: 1px;
        height: 22px;
        margin: 0 -1px;
        background: #b4b4b4;
    }

    /* title bar */
    .titlebar {
        position: relative;
        display: flex;
        flex: none;
        height: 29px;
        background: #d9d9d9;
    }

    .quick {
        display: flex;
        align-items: center;
        gap: 8px;
        height: 24px;
    }

    .quick .caret {
        margin: 0 -1px;
    }

    .logo {
        width: 24px;
        height: 22px;
        margin-right: -4px;
        border-right: 3px solid #0b3c9c;
        border-bottom: 3px solid #0b3c9c;
        background: #1f6fff;
        color: #fff;
        font-size: 14px;
        font-weight: 700;
        line-height: 18px;
    }

    .tool.open {
        margin-left: 4px;
    }

    .tool.thin {
        margin: 0 -4px;
        padding: 2px 3px;
        border: 1px solid #70bbdf;
        background: #cbe3f0;
    }

    .more {
        display: flex;
        padding: 2px 1px 0;
        border-top: 1px solid #333;
    }

    h1 {
        flex: 1;
        padding-top: 2px;
        text-align: center;
        white-space: nowrap;
    }

    .account {
        display: flex;
        align-items: center;
        gap: 8px;
        height: 24px;
    }

    .login {
        display: flex;
        align-items: center;
        gap: 4px;
        margin-right: 2px;
    }

    .help {
        width: 16px;
        height: 16px;
        margin-left: 2px;
        border: 1px solid #33406a;
        border-radius: 50%;
        background: #fff;
        color: #1b52c4;
        font-weight: 700;
        line-height: 14px;
    }

    .window-buttons {
        display: flex;
        align-items: center;
        gap: 13px;
        height: 24px;
        padding: 0 6px 0 62px;
    }

    .window-buttons svg {
        display: block;
        width: 12px;
        height: 12px;
        fill: none;
        stroke: #444;
    }

    .recording {
        position: absolute;
        top: 0;
        left: 840px;
        width: 240px;
        height: 1px;
        background: linear-gradient(90deg, #e81123 48px, #eee 48px);
    }

    /* ribbon tabs */
    .tabs {
        display: flex;
        flex: none;
        height: 20px;
        background: #d9d9d9;
    }

    .tabs button {
        padding: 0 9px;
    }

    .tabs .file {
        margin-right: 3px;
        background: #2b7cb3;
        color: #fff;
    }

    .tabs .active {
        background: #f5f5f5;
    }

    .tabs .minimize {
        display: flex;
        align-items: center;
        gap: 4px;
        margin-left: 12px;
    }

    .pill {
        display: grid;
        place-items: center;
        width: 15px;
        height: 9px;
        border: 1px solid #444;
        border-radius: 3px;
        background: #fff;
    }

    .pill::after {
        content: "";
        border: 3px solid transparent;
        border-top: 0;
        border-bottom: 3px solid #333;
    }

    /* ribbon */
    .ribbon {
        display: flex;
        flex: none;
        height: 96px;
        border-bottom: 1px solid #d0d0d0;
        background: #f5f5f5;
    }

    .panel {
        display: flex;
        flex-direction: column;
        margin: 1px 0;
        padding: 2px 2px 0;
        border-right: 1px solid #dcdcdc;
    }

    .panel:last-child {
        border: 0;
    }

    .panel-body {
        display: flex;
        height: 72px;
    }

    .panel-title {
        display: flex;
        align-items: center;
        justify-content: center;
        gap: 6px;
        height: 21px;
        padding-top: 1px;
    }

    .big {
        display: flex;
        flex-direction: column;
        align-items: center;
        min-width: 38px;
        padding: 3px 3px 0;
        line-height: 15px;
        white-space: pre;
    }

    .big.split {
        padding: 3px 10px 0;
    }

    .big .caret {
        margin-top: 2px;
    }

    .big.active {
        min-width: 60px;
        padding: 2px 2px 0;
        border: 1px solid #70bbdf;
        background: #dceef8;
    }

    .big-icon {
        width: 32px;
        height: 32px;
        margin-bottom: 4px;
        fill: none;
    }

    .col {
        display: flex;
        flex-direction: column;
        justify-content: center;
    }

    .small {
        display: flex;
        align-items: center;
        gap: 5px;
        height: 24px;
        padding: 0 4px;
        white-space: pre;
    }

    .small:disabled {
        color: #c4c4c4;
    }

    .options-bar {
        flex: none;
        height: 28px;
        border-bottom: 2px solid #bfc1c1;
        background: #f5f5f5;
    }

    /* work area */
    main {
        display: flex;
        flex: 1;
        min-height: 0;
    }

    h2 {
        display: flex;
        justify-content: space-between;
        align-items: center;
        flex: none;
        height: 17px;
        padding: 0 2px;
        background: #d9d9d9;
        white-space: nowrap;
    }

    .properties {
        display: flex;
        flex: none;
        flex-direction: column;
        width: 221px;
        padding-right: 1px;
        border-right: 2px solid #bdbdbd;
        background: #f4f4f4;
    }

    .type {
        display: flex;
        align-items: center;
        gap: 4px;
        flex: none;
        height: 71px;
        margin: 0 1px;
        padding: 1px 6px 1px 2px;
        border: 1px solid #bbb;
    }

    .type select {
        flex: 1;
    }

    .type .caret {
        border-top-color: #888;
    }

    .preview {
        display: grid;
        place-items: center;
        width: 66px;
        height: 66px;
        border: 1px solid #bbb;
    }

    .preview svg {
        width: 32px;
        height: 32px;
        fill: none;
        stroke: #555;
    }

    .dash {
        stroke: #888;
        stroke-dasharray: 3 1;
    }

    .instance {
        display: flex;
        flex: none;
        gap: 4px;
        height: 32px;
        padding: 1px 1px 0;
    }

    .instance label {
        display: flex;
        align-items: center;
        justify-content: space-between;
        width: 108px;
        height: 26px;
        padding: 0 4px;
        border-bottom: 2px solid #c4c4c4;
    }

    .instance button {
        display: flex;
        align-items: center;
        gap: 5px;
        height: 26px;
    }

    .grid-wrap {
        display: flex;
        flex: 1;
        min-height: 0;
    }

    .grid-scroll {
        flex: 1;
        overflow: hidden;
        padding-left: 1px;
        background: #fff;
    }

    table {
        width: 100%;
        border-collapse: collapse;
        table-layout: fixed;
    }

    .c-name { width: 93px; }
    .c-value { width: 93px; }

    tr {
        height: 18px;
    }

    td {
        height: 18px;
        padding: 0;
        border-right: 1px dotted #ddd;
        border-bottom: 1px dotted #ddd;
        line-height: 15px;
        white-space: nowrap;
    }

    td:first-child {
        padding-left: 8px;
    }

    td > * {
        display: block;
        height: 17px;
    }

    td output {
        padding-left: 2px;
    }

    td button {
        width: 90px;
        height: 15px;
        margin: 1px 1px 0;
        border: 1px solid #bbb;
        background: #f4f4f4;
        line-height: 13px;
    }

    td input[type="text"] {
        width: 92px;
        padding-left: 4px;
        border: 1px solid #000;
    }

    td input[type="checkbox"] {
        width: 11px;
        height: 11px;
        margin: 3px 0 3px 4px;
        border: 1px solid #777;
    }

    .off {
        color: #999;
    }

    .group th {
        height: 18px;
        padding: 0 0 0 2px;
        background: #f2f2f2;
        font-weight: 400;
        text-align: left;
    }

    .group svg {
        display: block;
        width: 8px;
        height: 8px;
        margin-left: -3px;
        fill: none;
        stroke: #222;
    }

    .vscroll {
        display: flex;
        flex: none;
        flex-direction: column;
        width: 17px;
        background: #e8e8e8;
    }

    .vscroll button {
        display: grid;
        place-items: center;
        flex: none;
        height: 17px;
        border-bottom: 1px solid #d8d8d8;
        background: #eee;
    }

    .track {
        display: flex;
        flex: 1;
        justify-content: center;
    }

    .track.mid {
        align-items: center;
    }

    .thumb {
        width: 5px;
        height: 16px;
        border-radius: 2px;
        background: #cfcfcf;
    }

    .thumb.long {
        height: 93%;
    }

    .properties footer {
        display: flex;
        flex: none;
        justify-content: space-between;
        align-items: flex-start;
        height: 24px;
        padding: 0 3px 0 1px;
        background: #ececec;
    }

    .properties a {
        color: #1a73b8;
    }

    .properties footer button {
        width: 70px;
        height: 18px;
        margin-top: 2px;
        border: 1px solid #c8c8c8;
        border-radius: 2px;
        color: #aaa;
    }

    /* view window */
    .view {
        display: flex;
        flex: 1;
        flex-direction: column;
        min-width: 0;
        padding-right: 2px;
    }

    .view-tabs {
        display: flex;
        align-items: center;
        flex: none;
        height: 20px;
        background: #cbcbcb;
    }

    .view-tab {
        display: flex;
        align-items: center;
        gap: 7px;
        height: 20px;
        padding: 1px 5px 0;
        color: #555;
    }

    .view-tab.active {
        width: 128px;
        background: #fff;
        color: #333;
        font-weight: 700;
    }

    .view-tab button {
        margin-left: auto;
    }

    .view-tabs .more {
        margin: 0 3px 0 auto;
    }

    .canvas-row {
        display: flex;
        flex: 1;
        min-height: 0;
    }

    .canvas-row .vscroll {
        margin-top: 2px;
    }

    .canvas {
        position: relative;
        flex: 1;
        background: #fff;
    }

    .drawing {
        display: block;
        width: 100%;
        height: 100%;
        fill: none;
        stroke: #000;
        shape-rendering: crispEdges;
    }

    .drawing text {
        fill: #000;
        stroke: none;
        font: 16px "Liberation Sans", Arial, sans-serif;
    }

    .solid {
        fill: #000;
    }

    .navbar {
        position: absolute;
        top: 2px;
        right: 0;
        display: flex;
        flex-direction: column;
        align-items: center;
        justify-content: space-between;
        width: 36px;
        height: 118px;
        padding: 2px 4px;
        border: 2px solid #c2c2c2;
        border-radius: 5px;
        background: #f4f4f4;
    }

    .navbar button {
        position: relative;
    }

    .navbar svg {
        display: block;
        width: 24px;
        fill: #f8f8f8;
        stroke: #999;
    }

    .navbar hr + button svg {
        width: 18px;
    }

    .navbar b {
        position: absolute;
        right: -3px;
        bottom: -1px;
        color: #5a92c8;
        font-size: 10px;
        line-height: 10px;
    }

    .navbar hr {
        width: 100%;
        margin: 0;
        border: 0;
        border-top: 1px solid #bbb;
    }

    .navbar .caret {
        border-top-color: #888;
    }

    .dot {
        align-self: flex-end;
        width: 8px;
        height: 8px;
        border: 1px solid #aaa;
        border-radius: 50%;
        color: #999;
        font-size: 8px;
        font-style: normal;
        line-height: 6px;
        text-align: center;
    }

    .view-bar {
        display: flex;
        align-items: center;
        gap: 10px;
        flex: none;
        height: 18px;
        margin: 0 0 1px 2px;
        background: #f4f4f4;
    }

    .scale {
        width: 73px;
        padding-left: 8px;
    }

    .hscroll {
        display: flex;
        flex: 1;
        height: 18px;
        margin-left: -4px;
        background: #e8e8e8;
    }

    .hscroll button {
        display: grid;
        place-items: center;
        width: 17px;
        background: #eee;
    }

    .htrack {
        display: flex;
        flex: 1;
        align-items: center;
        justify-content: center;
    }

    .hthumb {
        width: 17px;
        height: 5px;
        border-radius: 2px;
        background: #cfcfcf;
    }

    .grip {
        width: 17px;
        margin-left: -10px;
        color: #888;
        font-weight: 700;
        text-align: center;
    }

    /* project browser */
    .browser {
        display: flex;
        flex: none;
        flex-direction: column;
        width: 237px;
        border-left: 2px solid #bdbdbd;
        background: #eee;
    }

    .browser h2 {
        padding: 0 1px 0 3px;
    }

    .browser-body {
        flex: 1;
        margin: 0 0 2px 2px;
        background: #fff;
    }

    .search {
        display: flex;
        align-items: center;
        gap: 8px;
        height: 25px;
        margin: 9px 8px 8px;
        padding: 0 7px;
        border: 1px solid #ddd;
    }

    .search input {
        flex: 1;
        min-width: 0;
    }

    .search input::placeholder {
        color: #b4b4b4;
        opacity: 1;
    }

    li {
        position: relative;
        display: flex;
        align-items: center;
        gap: 4px;
        height: 20px;
        padding-left: 4px;
        border: 1px solid transparent;
        color: #4c4c4c;
        white-space: nowrap;
    }

    .level1 { padding-left: 20px; }
    .level2 { padding-left: 52px; }
    .level0 .sign { margin-right: 4px; }
    .level1 .sign { margin-right: 4px; }

    .level2 .sign {
        display: none;
    }

    .current {
        border-color: #ddd;
        background: #f2f2f2;
        color: #333;
        font-weight: 700;
    }

    .sign {
        position: relative;
        width: 8px;
        height: 8px;
    }

    .minus::before,
    .plus::before {
        content: "";
        position: absolute;
        top: 3px;
        width: 8px;
        height: 2px;
        background: #777;
    }

    .plus::after {
        content: "";
        position: absolute;
        left: 3px;
        width: 2px;
        height: 8px;
        background: #777;
    }

    .level1::before,
    .level2::before {
        content: "";
        position: absolute;
        top: -1px;
        left: 7px;
        width: 8px;
        height: 10px;
        border-left: 1px dashed #aaa;
        border-bottom: 1px dashed #aaa;
    }

    .level2::before {
        top: -11px;
        left: 23px;
        width: 25px;
        height: 20px;
    }

    .level1::after,
    .level2::after {
        content: "";
        position: absolute;
        top: -1px;
        left: 7px;
        height: 20px;
        border-left: 1px dashed #aaa;
    }

    .level1.last::after {
        display: none;
    }

    /* status bar */
    .status {
        display: flex;
        align-items: center;
        flex: none;
        height: 22px;
        padding: 3px 72px 0 1px;
        background: #f4f4f4;
    }

    .status p {
        flex: 1;
        white-space: nowrap;
    }

    .status label,
    .status button {
        display: flex;
        align-items: center;
    }

    .worksets,
    .selection {
        display: flex;
        align-items: center;
        gap: 10px;
    }

    .worksets {
        margin-right: 337px;
    }

    .worksets label {
        width: 228px;
        justify-content: space-between;
    }

    .worksets .model {
        width: 200px;
    }

    .worksets select {
        flex: 1;
    }

    .worksets .chevron {
        stroke: #bbb;
    }

    .pale,
    .model {
        color: #999;
    }

    .worksets .pale {
        margin-right: 16px;
    }
</style>
